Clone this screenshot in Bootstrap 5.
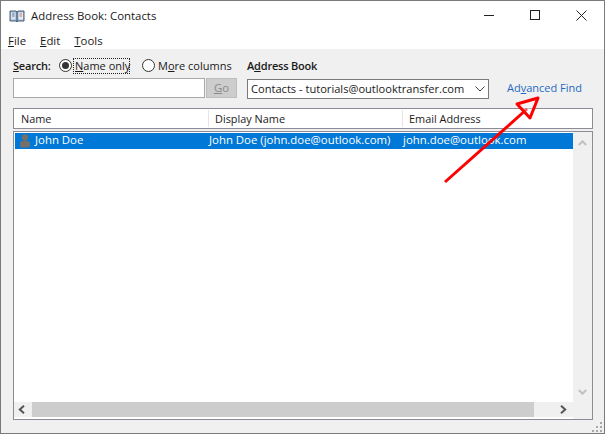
<!DOCTYPE html>
<html lang="en">
<head>
<meta charset="utf-8">
<title>Address Book: Contacts</title>
<link rel="stylesheet" href="https://cdn.jsdelivr.net/npm/bootstrap@5.3.0/dist/css/bootstrap.min.css">
<style>
html,body{margin:0;padding:0;background:#fff;overflow:hidden}
body{width:605px;height:434px;font-family:"Open Sans","Noto Sans",sans-serif;font-size:11px;line-height:16px;color:#1a1a1a}
.win{width:605px;height:434px;border:1px solid #7a7a7a;background:#f0f0f0;position:relative}
.titlebar{height:30px;background:#fff;padding-left:8px;gap:6px;font-size:11.4px}
.winbtns{margin-left:auto;margin-top:-2px}
.winbtn{width:46px;height:27px}
.menubar{height:18px;background:#fff;padding:1px 0 0 7px;gap:14px;font-size:11.4px}
u{text-underline-offset:1px}
.content{padding:8px 12px 0 12px}
.searchrow{height:17px}
.lbl{font-weight:600;letter-spacing:-.2px}
.lbl-s{width:46px}
.radio{width:13px;height:13px;border:1px solid #333;border-radius:50%;background:#fff;flex:none}
.radio.on::after{content:"";display:block;width:7px;height:7px;margin:2px;border-radius:50%;background:#333}
.opt1{margin-right:13px;gap:2px}
.focusbox{outline:1px dotted #222;padding:0 1px;height:14px;line-height:14px;width:55px;white-space:nowrap}
.opt2{gap:3px;width:105px;white-space:nowrap}
.inputrow{height:21px;margin-top:4px}
.srch{width:192px;height:20px;border:1px solid #a9a9a9;background:#fff}
.gobtn{width:31px;height:20px;margin-left:1px;border:1px solid #bdbdbd;background:#cdcdcd;color:#8a8a8a;font-size:11.4px;line-height:18px}
.combo{width:242px;height:20px;margin-left:10px;margin-top:1px;border:1px solid #7a7a7a;background:#fff;padding:0 3px 0 3px;white-space:nowrap;font-size:11.1px}
.adv{color:#1f6ac4;margin-left:18px;margin-top:2px;white-space:nowrap;font-size:11px}
.hdr{height:21px;margin-top:9px;width:580px;border:1px solid #8c8c96;background:#fff;font-size:10.9px;line-height:19px}
.hc1{width:194px;padding-left:7px}
.hc2{width:194px;padding-left:6px;border-left:1px solid #e5e5e5;margin:1px 0;line-height:17px}
.hc3{padding-left:6px;border-left:1px solid #e5e5e5;margin:1px 0;line-height:17px}
.listbox{height:289px;margin-top:2px;width:580px;border:1px solid #8c8c96;background:#fff}
.listmain{width:559px;padding:1px 0 0 1px}
.selrow{height:16px;background:#0078d7;color:#fff;line-height:14px;font-size:11.4px;white-space:nowrap}
.c1{width:194px;padding-left:4px;gap:3px}
.c1 svg{margin-top:1px}
.c2{width:194px}
.vbar{width:18px;background:#f0f0f0;padding:8px 0 24px}
.hbar{height:15px;background:#f0f0f0;margin:0 0 2px -1px;position:relative}
.arrL{position:absolute;left:4px;top:3px}
.thumb{width:502px;background:#cdcdcd;height:15px;margin-left:18px}
.arrR{margin-left:auto;margin-right:6px}
.arrowart{position:absolute;left:-1px;top:-1px;pointer-events:none}
.gripart{position:absolute;right:1px;bottom:0}
.flexfill{flex:1 1 auto;min-height:0}
</style>
</head>
<body>
<div class="win">
  <div class="titlebar d-flex align-items-center">
    <svg width="16" height="14" viewBox="0 0 16 14"><path d="M1 2h6l1 1 1-1h6v10H9l-1 1-1-1H1z" fill="#9fb8d2" stroke="#4c6076"/><path d="M8 3v9" stroke="#34495e"/><path d="M9.500 3.500h4.500v7H9.500z" fill="#e8eef5"/><path d="M2 3.500h4.500v7H2z" fill="#d8e3ee"/><path d="M10.500 5h2.500M10.500 7h2.500" stroke="#c9754a"/><path d="M3 5h2.500M3 7h2.500" stroke="#5b7c9d"/></svg>
    <span>Address Book: Contacts</span>
    <div class="winbtns d-flex">
      <div class="winbtn d-flex align-items-center justify-content-center"><svg width="11" height="11"><path d="M0 5.500h10" stroke="#222"/></svg></div>
      <div class="winbtn d-flex align-items-center justify-content-center"><svg width="11" height="11"><rect x=".5" y=".5" width="9" height="9" fill="none" stroke="#222"/></svg></div>
      <div class="winbtn d-flex align-items-center justify-content-center"><svg width="11" height="11"><path d="M.5.500l10 10M10.500.500l-10 10" stroke="#222"/></svg></div>
    </div>
  </div>
  <div class="menubar d-flex align-items-center">
    <span><u>F</u>ile</span><span><u>E</u>dit</span><span><u>T</u>ools</span>
  </div>
  <div class="content">
    <div class="searchrow d-flex align-items-center">
      <span class="lbl lbl-s"><u>S</u>earch:</span>
      <div class="d-flex align-items-center opt1"><span class="radio on"></span><span class="focusbox"><u>N</u>ame only</span></div>
      <div class="d-flex align-items-center opt2"><span class="radio"></span><span>M<u>o</u>re columns</span></div>
      <span class="lbl">A<u>d</u>dress Book</span>
    </div>
    <div class="inputrow d-flex align-items-start">
      <div class="srch"></div>
      <div class="gobtn text-center"><u>G</u>o</div>
      <div class="combo d-flex align-items-center justify-content-between">
        <span>Contacts - tutorials@outlooktransfer.com</span>
        <svg width="10" height="6" viewBox="0 0 10 6"><path d="M.5.500l4.500 4.500 4.500-4.500" fill="none" stroke="#444"/></svg>
      </div>
      <div class="adv">Ad<u>v</u>anced Find</div>
    </div>
    <div class="hdr d-flex">
      <div class="hc1">Name</div><div class="hc2">Display Name</div><div class="hc3">Email Address</div>
    </div>
    <div class="listbox d-flex">
      <div class="listmain d-flex flex-column">
        <div class="selrow d-flex">
          <div class="c1 d-flex align-items-start">
            <svg width="13" height="14" viewBox="0 0 13 14"><circle cx="6" cy="3.500" r="3.200" fill="#77706a"/><rect x="1" y="7" width="10" height="6.500" rx="2.800" fill="#77706a"/></svg>
            <span>John Doe</span>
          </div>
          <div class="c2">John Doe (john.doe@outlook.com)</div>
          <div>john.doe@outlook.com</div>
        </div>
        <div class="flexfill"></div>
        <div class="hbar d-flex align-items-center">
          <svg class="arrL" width="7" height="9" viewBox="0 0 7 9"><path d="M6 .8L1.800 4.500 6 8.200" fill="none" stroke="#555" stroke-width="2"/></svg>
          <div class="thumb"></div>
          <svg class="arrR" width="7" height="9" viewBox="0 0 7 9"><path d="M1 .8l4.200 3.700L1 8.200" fill="none" stroke="#555" stroke-width="2"/></svg>
        </div>
      </div>
      <div class="vbar d-flex flex-column align-items-center justify-content-between flex-fill">
        <svg width="9" height="6" viewBox="0 0 9 6"><path d="M.8 5L4.500 1.300 8.200 5" fill="none" stroke="#c0c0c0" stroke-width="2"/></svg>
        <svg width="9" height="6" viewBox="0 0 9 6"><path d="M.8 1l3.700 3.700L8.200 1" fill="none" stroke="#c0c0c0" stroke-width="2"/></svg>
      </div>
    </div>
  </div>
  <svg class="gripart" width="12" height="12" viewBox="0 0 12 12"><g fill="#a8a8a8"><rect x="9" y="1" width="2" height="2"/><rect x="5" y="5" width="2" height="2"/><rect x="9" y="5" width="2" height="2"/><rect x="1" y="9" width="2" height="2"/><rect x="5" y="9" width="2" height="2"/><rect x="9" y="9" width="2" height="2"/></g></svg>
  <svg class="arrowart" width="605" height="434" viewBox="0 0 605 434"><path d="M445 182L527 109" fill="none" stroke="#f00" stroke-width="3"/><path d="M538 98L517 104 530 118z" fill="#fff" fill-opacity=".35" stroke="#f00" stroke-width="3" stroke-linejoin="round"/></svg>
</div>
<script src="https://cdn.jsdelivr.net/npm/bootstrap@5.3.0/dist/js/bootstrap.bundle.min.js"></script>
</body>
</html>
